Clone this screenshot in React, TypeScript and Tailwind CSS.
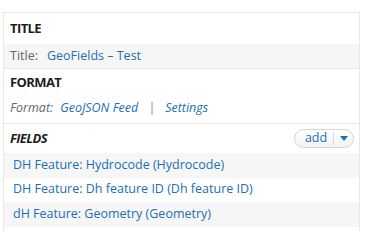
import React from 'react';

const font = { fontFamily: '"Open Sans", "Noto Sans", Verdana, sans-serif' };

function Header({ label, h }: { label: string; h: string }) {
  return (
    <div className={`flex items-center ${h} pl-[6px]`}>
      <h3 className="text-[13px] font-bold uppercase tracking-[-0.6px] text-[#1d1d1d]">{label}</h3>
    </div>
  );
}

export default function App() {
  const fields = [
    'DH Feature: Hydrocode (Hydrocode)',
    'DH Feature: Dh feature ID (Dh feature ID)',
    'dH Feature: Geometry (Geometry)',
  ];

  return (
    <div className="bg-white w-[376px] h-[231px] overflow-hidden pt-[12px] pl-[3px]" style={font}>
      <div className="w-[357px] border-t border-x border-[#e8e8e8] h-[240px]">
        {/* Title */}
        <div className="border-b border-[#e8e8e8]">
          <Header label="Title" h="h-[31px]" />
          <div className="h-[24px] flex items-center bg-[#f6f6f6] pl-[6px] text-[12.5px]">
            <span className="text-[#666]">Title:</span>
            <a className="ml-[9px] text-[#1a6fb5]">GeoFields – Test</a>
          </div>
        </div>

        {/* Format */}
        <div className="border-b border-[#e8e8e8]">
          <Header label="Format" h="h-[28px]" />
          <div className="h-[26px] flex items-start pt-[3px] pl-[6px] text-[12.5px] italic leading-[16px]">
            <span className="text-[#666]">Format:</span>
            <a className="ml-[7px] text-[#1a6fb5]">GeoJSON Feed</a>
            <span className="mx-[10px] text-[#888]">|</span>
            <a className="text-[#1a6fb5]">Settings</a>
          </div>
        </div>

        {/* Fields */}
        <div>
          <div className="flex items-center justify-between h-[29px] pl-[6px] pr-[5px]">
            <h3 className="text-[13px] font-bold uppercase italic tracking-[-0.6px] text-[#1d1d1d]">
              Fields
            </h3>
            <div className="flex items-center h-[19px] w-[60px] rounded-full border border-[#d4d4d4] bg-gradient-to-b from-white to-[#f3f3f3]">
              <span className="flex-1 text-center text-[12.5px] text-[#1a6fb5] leading-none pl-[4px]">
                add
              </span>
              <span className="h-[14px] w-px bg-[#dcdcdc]" />
              <span className="w-[19px] flex justify-center">
                <svg width="8" height="5" viewBox="0 0 8 5">
                  <path d="M0 0H8L4 5Z" fill="#1a6fb5" />
                </svg>
              </span>
            </div>
          </div>
          {fields.map((f, i) => (
            <div
              key={f}
              className={`h-[24.5px] flex items-center pl-[9px] text-[12.5px] text-[#1a6fb5] ${
                i % 2 === 0 ? 'bg-[#f6f6f6]' : 'bg-white'
              }`}
            >
              {f}
            </div>
          ))}
        </div>
      </div>
    </div>
  );
}
